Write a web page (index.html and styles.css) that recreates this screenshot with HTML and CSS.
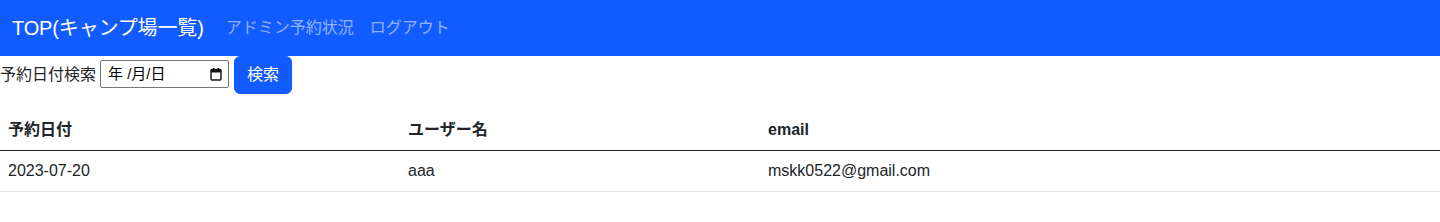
FILE: index.html
```html
<!DOCTYPE html>
<html lang="ja">
<head>
<meta charset="utf-8">
<title>予約状況</title>
<link rel="stylesheet" href="styles.css">
</head>
<body>
<nav class="navbar">
  <div class="navbar-inner">
    <a class="brand" href="#">TOP(キャンプ場一覧)</a>
    <ul class="nav">
      <li><a class="nav-link" href="#">アドミン予約状況</a></li>
      <li><a class="nav-link" href="#">ログアウト</a></li>
    </ul>
  </div>
</nav>
<form class="search">
  <label class="search-label">予約日付検索</label>
  <span class="date-field">
    <span class="date-text">年 /月/日</span>
    <svg class="cal" width="12" height="13" viewBox="0 0 12 13" aria-hidden="true">
      <rect x="1" y="1.5" width="10" height="10.5" rx="1" fill="none" stroke="#111" stroke-width="1.4"/>
      <rect x="1" y="1.5" width="10" height="3" fill="#111"/>
      <rect x="3" y="0" width="1.3" height="2.5" fill="#111"/>
      <rect x="7.7" y="0" width="1.3" height="2.5" fill="#111"/>
    </svg>
  </span>
  <button type="button" class="btn">検索</button>
</form>
<table class="table">
  <thead>
    <tr>
      <th class="col-date">予約日付</th>
      <th class="col-user">ユーザー名</th>
      <th>email</th>
    </tr>
  </thead>
  <tbody>
    <tr>
      <td>2023-07-20</td>
      <td>aaa</td>
      <td>mskk0522@gmail.com</td>
    </tr>
  </tbody>
</table>
</body>
</html>
```

FILE: styles.css
```css
* { box-sizing: border-box; }
body {
  margin: 0;
  font-family: "Liberation Sans", "Noto Sans CJK JP", sans-serif;
  font-size: 16px;
  line-height: 24px;
  color: #212529;
  background: #fff;
}
.navbar {
  background: #115bff;
  height: 56px;
  display: flex;
  align-items: center;
}
.navbar-inner {
  display: flex;
  align-items: center;
  padding: 0 12px;
}
.brand {
  color: #fff;
  font-size: 20px;
  line-height: 30px;
  text-decoration: none;
  margin-right: 14px;
  padding: 5px 0;
  letter-spacing: -0.15px;
}
.nav {
  display: flex;
  list-style: none;
  margin: 0;
  padding: 0;
}
.nav-link {
  display: block;
  padding: 8px;
  color: rgba(255,255,255,0.55);
  text-decoration: none;
}
.search {
  display: flex;
  align-items: center;
  margin: 0 0 16px;
  height: 38px;
}
.search-label {
  margin-right: 4px;
}
.date-field {
  display: flex;
  align-items: center;
  justify-content: space-between;
  width: 129px;
  height: 28px;
  border: 1px solid #767676;
  border-radius: 2px;
  padding: 0 6px 0 7px;
  font-size: 15px;
  color: #000;
  margin-top: 3px;
  margin-bottom: 5px;
}
.date-text { line-height: 20px; }
.cal { display: block; }
.btn {
  margin-left: 5px;
  background: #115bff;
  color: #fff;
  border: 1px solid #115bff;
  border-radius: 6px;
  padding: 6px 12px;
  font: inherit;
  line-height: 24px;
  height: 38px;
  width: 58px;
}
.table {
  width: 100%;
  border-collapse: collapse;
}
.table th, .table td {
  text-align: left;
  padding: 8px;
  border-bottom: 1px solid #dee2e6;
}
.table th { font-weight: bold; }
.table thead th { border-bottom: 1px solid #212529; }
.col-date { width: 400px; }
.col-user { width: 360px; }
```
